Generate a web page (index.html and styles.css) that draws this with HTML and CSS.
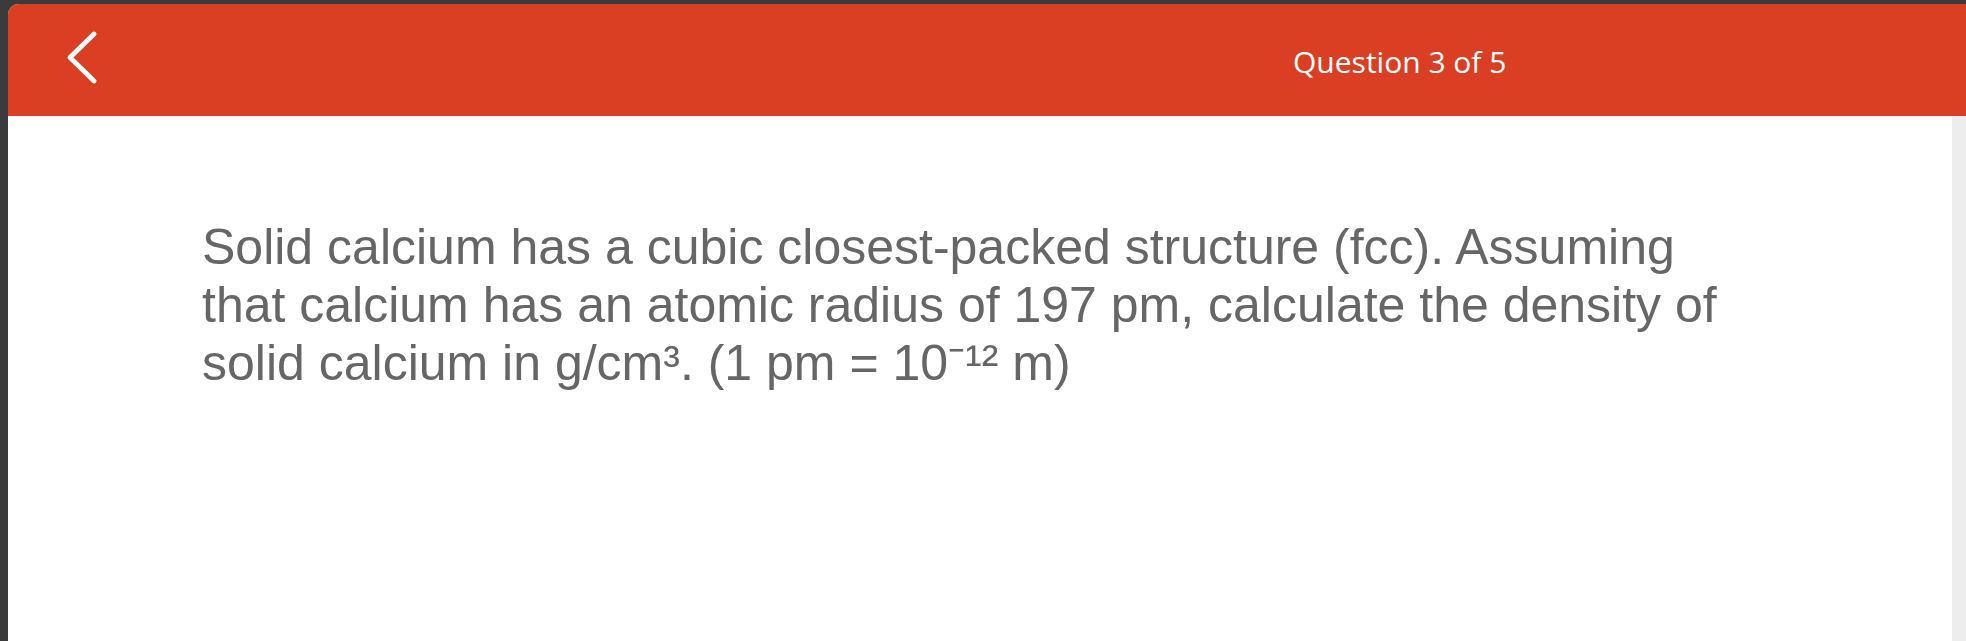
FILE: index.html
```html
<!DOCTYPE html>
<html>
<head>
<meta charset="utf-8">
<link rel="stylesheet" href="styles.css">
</head>
<body>
<div class="window">
  <header class="topbar">
    <button class="back" aria-label="Back">
      <svg width="34" height="54" viewBox="0 0 34 54"><path d="M28 3 L4 26.5 L28 50" fill="none" stroke="#fff" stroke-width="4.8" stroke-linecap="round" stroke-linejoin="round"/></svg>
    </button>
    <div class="title">Question 3 of 5</div>
  </header>
  <div class="main">
    <div class="content">
      <p class="question">Solid calcium has a cubic closest-packed structure (fcc). Assuming that calcium has an atomic radius of 197 pm, calculate the density of solid calcium in g/cm³. (1 pm = 10⁻¹² m)</p>
    </div>
    <div class="scrollbar"></div>
  </div>
</div>
</body>
</html>
```
FILE: styles.css
```css
html, body {
  margin: 0;
  padding: 0;
  height: 100%;
}
body {
  background: #3b3b3b;
  overflow: hidden;
}
.window {
  margin: 4px 0 0 8px;
  height: calc(100% - 4px);
  border-top-left-radius: 11px;
  overflow: hidden;
  display: flex;
  flex-direction: column;
  background: #fff;
}
.topbar {
  height: 112px;
  flex: none;
  background: #da3f24;
  display: flex;
  align-items: center;
}
.back {
  background: none;
  border: 0;
  padding: 0;
  margin: 0 0 4px 58px;
  width: 34px;
  height: 54px;
  display: flex;
  align-items: center;
  justify-content: center;
  cursor: pointer;
}
.back svg { display: block; }
.title {
  margin-left: 1193px;
  margin-top: 2px;
  color: #fff;
  font-family: "Open Sans", "Noto Sans", sans-serif;
  font-size: 30px;
}
.main {
  flex: 1;
  display: flex;
}
.content {
  flex: 1;
  padding: 102px 0 0 194px;
}
.scrollbar {
  width: 14px;
  background: #ededed;
}
.question {
  margin: 0;
  max-width: 1540px;
  color: #666;
  font-family: "Liberation Sans", Arial, sans-serif;
  font-size: 50px;
  line-height: 58px;
}
```
